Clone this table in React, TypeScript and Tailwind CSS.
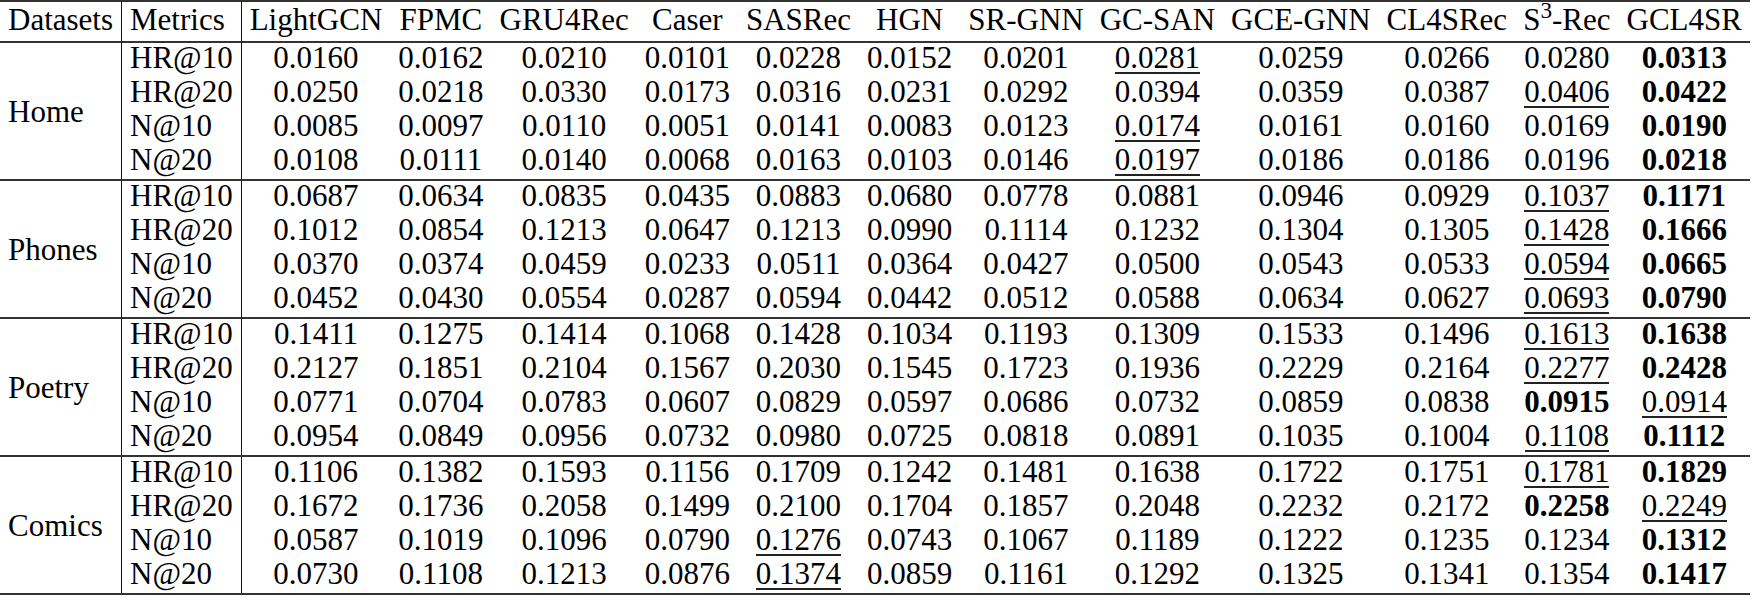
import React from "react";

const columns = [
  "LightGCN",
  "FPMC",
  "GRU4Rec",
  "Caser",
  "SASRec",
  "HGN",
  "SR-GNN",
  "GC-SAN",
  "GCE-GNN",
  "CL4SRec",
  "S3-Rec",
  "GCL4SR",
];

// "_" = second best (underlined), "*" = best (bold)
const groups = [
  {
    name: "Home",
    rows: [
      ["HR@10", "0.0160 0.0162 0.0210 0.0101 0.0228 0.0152 0.0201 _0.0281 0.0259 0.0266 0.0280 *0.0313"],
      ["HR@20", "0.0250 0.0218 0.0330 0.0173 0.0316 0.0231 0.0292 0.0394 0.0359 0.0387 _0.0406 *0.0422"],
      ["N@10", "0.0085 0.0097 0.0110 0.0051 0.0141 0.0083 0.0123 _0.0174 0.0161 0.0160 0.0169 *0.0190"],
      ["N@20", "0.0108 0.0111 0.0140 0.0068 0.0163 0.0103 0.0146 _0.0197 0.0186 0.0186 0.0196 *0.0218"],
    ],
  },
  {
    name: "Phones",
    rows: [
      ["HR@10", "0.0687 0.0634 0.0835 0.0435 0.0883 0.0680 0.0778 0.0881 0.0946 0.0929 _0.1037 *0.1171"],
      ["HR@20", "0.1012 0.0854 0.1213 0.0647 0.1213 0.0990 0.1114 0.1232 0.1304 0.1305 _0.1428 *0.1666"],
      ["N@10", "0.0370 0.0374 0.0459 0.0233 0.0511 0.0364 0.0427 0.0500 0.0543 0.0533 _0.0594 *0.0665"],
      ["N@20", "0.0452 0.0430 0.0554 0.0287 0.0594 0.0442 0.0512 0.0588 0.0634 0.0627 _0.0693 *0.0790"],
    ],
  },
  {
    name: "Poetry",
    rows: [
      ["HR@10", "0.1411 0.1275 0.1414 0.1068 0.1428 0.1034 0.1193 0.1309 0.1533 0.1496 _0.1613 *0.1638"],
      ["HR@20", "0.2127 0.1851 0.2104 0.1567 0.2030 0.1545 0.1723 0.1936 0.2229 0.2164 _0.2277 *0.2428"],
      ["N@10", "0.0771 0.0704 0.0783 0.0607 0.0829 0.0597 0.0686 0.0732 0.0859 0.0838 *0.0915 _0.0914"],
      ["N@20", "0.0954 0.0849 0.0956 0.0732 0.0980 0.0725 0.0818 0.0891 0.1035 0.1004 _0.1108 *0.1112"],
    ],
  },
  {
    name: "Comics",
    rows: [
      ["HR@10", "0.1106 0.1382 0.1593 0.1156 0.1709 0.1242 0.1481 0.1638 0.1722 0.1751 _0.1781 *0.1829"],
      ["HR@20", "0.1672 0.1736 0.2058 0.1499 0.2100 0.1704 0.1857 0.2048 0.2232 0.2172 *0.2258 _0.2249"],
      ["N@10", "0.0587 0.1019 0.1096 0.0790 _0.1276 0.0743 0.1067 0.1189 0.1222 0.1235 0.1234 *0.1312"],
      ["N@20", "0.0730 0.1108 0.1213 0.0876 _0.1374 0.0859 0.1161 0.1292 0.1325 0.1341 0.1354 *0.1417"],
    ],
  },
];

function Value({ v }: { v: string }) {
  if (v.startsWith("*")) return <span className="font-bold">{v.slice(1)}</span>;
  if (v.startsWith("_"))
    return (
      <span className="inline-block leading-[29px] -mb-[2px] border-b-2 border-[#222]">
        {v.slice(1)}
      </span>
    );
  return <>{v}</>;
}

export default function App() {
  return (
    <div className="bg-white text-black [font-family:'Liberation_Serif','Times_New_Roman',serif] text-[31px]">
      <table className="border-collapse whitespace-nowrap">
        <thead>
          <tr className="border-t-2 border-b-2 border-[#333]">
            <th className="px-2 pt-[3px] pb-[7px] leading-[29px] font-normal text-left border-r border-[#111]">
              Datasets
            </th>
            <th className="px-2 pt-[3px] pb-[7px] leading-[29px] font-normal text-left border-r border-[#111]">
              Metrics
            </th>
            {columns.map((c) => (
              <th key={c} className="px-2 pt-[3px] pb-[7px] leading-[29px] font-normal text-center">
                {c === "S3-Rec" ? (
                  <>
                    S<sup>3</sup>-Rec
                  </>
                ) : (
                  c
                )}
              </th>
            ))}
          </tr>
        </thead>
        <tbody>
          {groups.map((g) =>
            g.rows.map(([metric, vals], i) => (
              <tr key={g.name + metric} className={i === 3 ? "border-b-2 border-[#333]" : ""}>
                {i === 0 && (
                  <td
                    rowSpan={4}
                    className="px-2 align-middle leading-[29px] text-left border-r border-[#111]"
                  >
                    {g.name}
                  </td>
                )}
                <td className="px-2 pt-0 pb-[5px] leading-[29px] text-left border-r border-[#111]">
                  {metric}
                </td>
                {vals.split(" ").map((v, j) => (
                  <td key={j} className="px-2 pt-0 pb-[5px] leading-[29px] text-center">
                    <Value v={v} />
                  </td>
                ))}
              </tr>
            ))
          )}
        </tbody>
      </table>
    </div>
  );
}
